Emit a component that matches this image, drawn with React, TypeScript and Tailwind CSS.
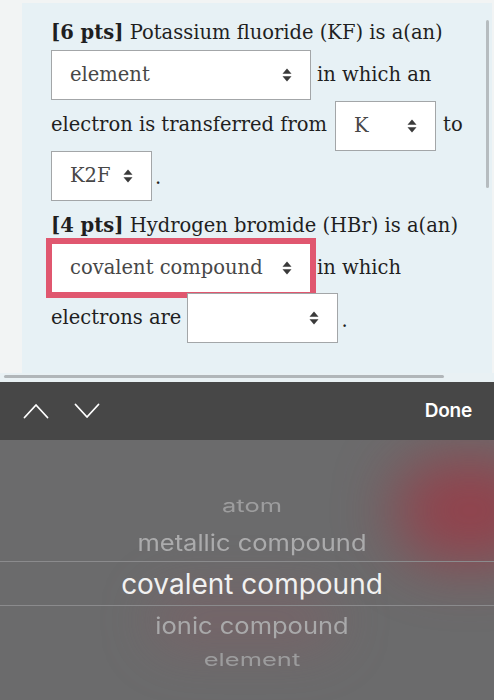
const serif = { fontFamily: '"DejaVu Serif", "Liberation Serif", serif' };

function UpDown() {
  return (
    <svg width="10" height="14" viewBox="0 0 10 14" className="shrink-0">
      <polygon points="0.5,5.8 5,0.6 9.5,5.8" fill="#3a3a3a" />
      <polygon points="0.5,8.2 9.5,8.2 5,13.4" fill="#3a3a3a" />
    </svg>
  );
}

interface SelectBoxProps {
  value?: string;
  width: string;
  focused?: boolean;
}

function SelectBox({ value, width, focused }: SelectBoxProps) {
  return (
    <div
      className={`${width} h-[50px] shrink-0 flex items-center justify-between bg-white pl-[18px] pr-[18px] text-[#474747] ${
        focused
          ? 'border border-[#e0576f] outline-[5px] outline-solid outline-[#e0576f]'
          : 'border border-[#a3a6a8]'
      }`}
    >
      <span className="leading-[24px] whitespace-nowrap">{value}</span>
      <UpDown />
    </div>
  );
}

function Chevron({ up }: { up?: boolean }) {
  return (
    <svg width="26" height="16" viewBox="0 0 26 16" fill="none">
      <polyline
        points={up ? '1.5,14.5 13,2 24.5,14.5' : '1.5,1.5 13,14 24.5,1.5'}
        stroke="#ffffff"
        strokeWidth="1.8"
        strokeLinecap="round"
        strokeLinejoin="round"
      />
    </svg>
  );
}

export default function App() {
  return (
    <div className="w-[494px] h-[700px] flex flex-col overflow-hidden bg-[#f2f4f4]">
      {/* question panel */}
      <div className="h-[373px] flex pt-[3px] bg-[#f2f4f4]">
        <div className="w-[22px] shrink-0" />
        <div
          className="relative flex-1 bg-[#e7f1f5] pl-[29px] pt-[13px] text-[19.5px] text-[#1f1f1f]"
          style={serif}
        >
          <div className="h-[34px] flex items-center whitespace-nowrap leading-[24px]">
            <span className="font-bold">[6 pts]</span>&nbsp;Potassium fluoride (KF) is a(an)
          </div>
          <div className="h-[50px] flex items-center gap-[6px] whitespace-nowrap leading-[24px]">
            <SelectBox value="element" width="w-[260px]" />
            <span>in which an</span>
          </div>
          <div className="h-[50px] flex items-center whitespace-nowrap leading-[24px]">
            <span>electron is transferred from</span>
            <div className="ml-[8px] mr-[7px] pt-[1px]">
              <SelectBox value="K" width="w-[101px]" />
            </div>
            <span>to</span>
          </div>
          <div className="h-[50px] flex items-center whitespace-nowrap leading-[24px]">
            <div className="pt-[1px]">
              <SelectBox value="K2F" width="w-[101px]" />
            </div>
            <span className="ml-[3px] pt-[6px]">.</span>
          </div>
          <div className="h-[43px] pt-[8px] flex items-center whitespace-nowrap leading-[24px]">
            <span className="font-bold">[4 pts]</span>&nbsp;Hydrogen bromide (HBr) is a(an)
          </div>
          <div className="h-[50px] flex items-center gap-[6px] whitespace-nowrap leading-[24px]">
            <SelectBox value="covalent compound" width="w-[260px]" focused />
            <span>in which</span>
          </div>
          <div className="h-[50px] flex items-center whitespace-nowrap leading-[24px]">
            <span>electrons are</span>
            <div className="ml-[6px]">
              <SelectBox width="w-[151px]" />
            </div>
            <span className="ml-[3px] pt-[6px]">.</span>
          </div>

          <div className="absolute left-[464px] top-[17px] w-[3px] h-[168px] rounded-full bg-[#b6bcbf]" />
        </div>
        <div className="w-[2px] shrink-0" />
      </div>

      {/* horizontal scrollbar */}
      <div className="h-[9px] bg-[#e9f1f4] pl-[4px] pt-[2px]">
        <div className="w-[440px] h-[3px] rounded-full bg-[#b1b6b9]" />
      </div>

      {/* keyboard accessory bar */}
      <div
        className="h-[58px] bg-[#474747] flex items-center pl-[23px] pr-[22px]"
        style={{ fontFamily: 'Inter, "Liberation Sans", sans-serif' }}
      >
        <div className="flex items-center gap-[25px]">
          <Chevron up />
          <Chevron />
        </div>
        <span className="ml-auto text-[19px] font-semibold text-white tracking-[-0.2px]">Done</span>
      </div>

      {/* picker wheel */}
      <div
        className="relative flex-1 overflow-hidden bg-[#6b6b6c]"
        style={{ fontFamily: 'Inter, "Liberation Sans", sans-serif' }}
      >
        <div className="absolute left-[395px] top-[18px] w-[150px] h-[105px] rounded-full bg-[#a3303f]/70 blur-[30px]" />
        <div className="absolute left-[150px] top-[150px] w-[190px] h-[60px] rounded-full bg-[#8a5a60]/35 blur-[25px]" />

        <div className="relative flex flex-col pt-[47px]">
          <div className="h-[37px] pl-[10px] flex items-center justify-center">
            <span className="text-[25.5px] leading-none text-[#9d9d9e] scale-y-[0.7]">atom</span>
          </div>
          <div className="h-[37px] pl-[10px] flex items-center justify-center">
            <span className="text-[25.5px] leading-none text-[#ababac] scale-y-[0.88]">metallic compound</span>
          </div>
          <div className="h-[45px] pl-[10px] flex items-center justify-center border-y border-[#8b8b8d]">
            <span className="text-[28px] leading-none text-[#f1f1f1]">covalent compound</span>
          </div>
          <div className="h-[39px] pl-[10px] flex items-center justify-center">
            <span className="text-[25.5px] leading-none text-[#a9a9aa] scale-y-[0.88]">ionic compound</span>
          </div>
          <div className="h-[30px] pl-[10px] flex items-center justify-center">
            <span className="text-[25.5px] leading-none text-[#9c9c9d] scale-y-[0.7]">element</span>
          </div>
        </div>
      </div>
    </div>
  );
}
